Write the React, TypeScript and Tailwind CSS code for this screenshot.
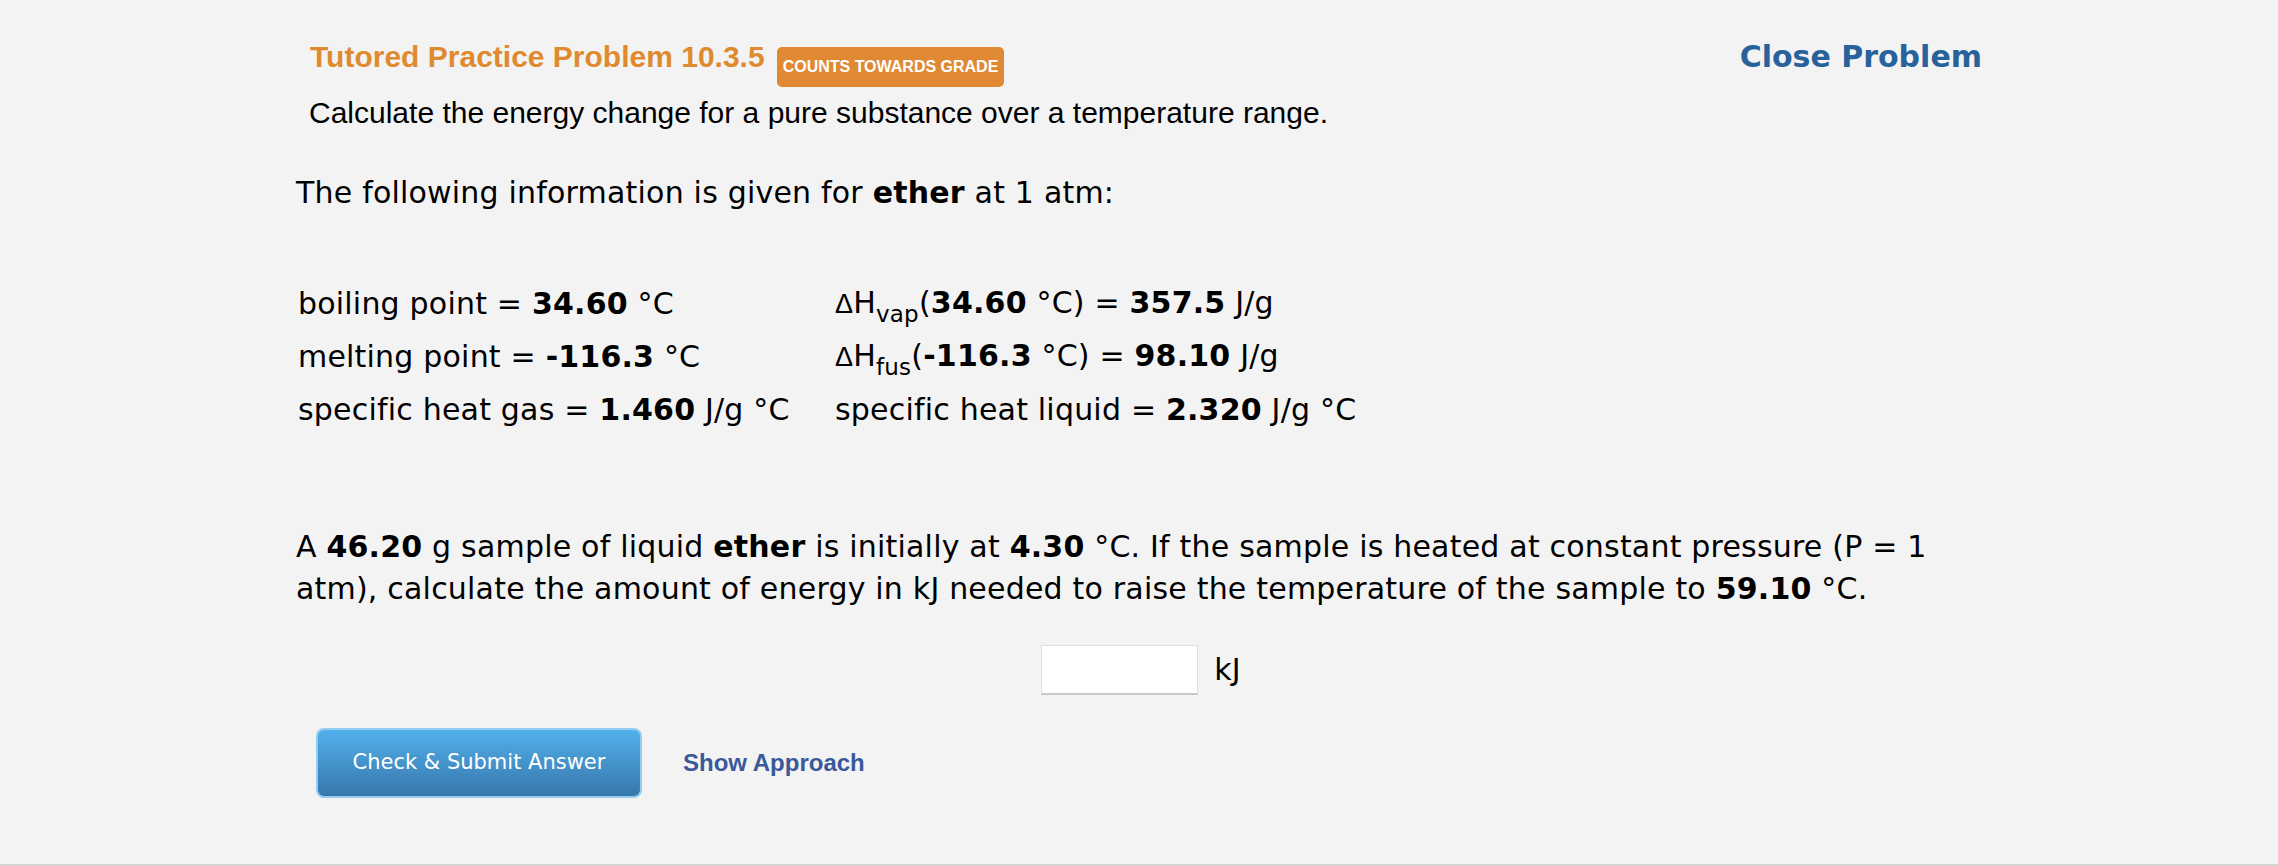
import React from "react";

const body = "font-['DejaVu_Sans',Verdana,sans-serif]";
const arial = "font-['Liberation_Sans',Arial,sans-serif]";

function Sub({ children }: { children: React.ReactNode }) {
  return (
    <span className="relative top-[9px] text-[23px] leading-none">{children}</span>
  );
}

function Delta() {
  return <span className={`${arial} text-[27px] font-normal`}>Δ</span>;
}

export default function App() {
  return (
    <div className="h-[866px] w-full overflow-hidden border-b-2 border-[#d5d5d5] bg-[#f3f3f3] text-black">
      <div className="ml-[296px] w-[1690px] pt-[39px]">
        {/* header */}
        <div className="flex items-start justify-between">
          <div className="flex items-start pl-[14px]">
            <h1 className={`${arial} text-[30px] font-bold leading-[36px] text-[#e08a30]`}>
              Tutored Practice Problem 10.3.5
            </h1>
            <span
              className={`${arial} ml-[12px] mt-[8px] flex h-[40px] items-center rounded-[5px] bg-[#df8a33] px-[6px] text-[16px] font-bold text-white`}
            >
              COUNTS TOWARDS GRADE
            </span>
          </div>
          <a className={`${body} pr-[4px] text-[30px] font-bold leading-[36px] text-[#28629a]`}>
            Close Problem
          </a>
        </div>

        <p className={`${arial} mt-[8px] pl-[13px] text-[30px] leading-[36px]`}>
          Calculate the energy change for a pure substance over a temperature range.
        </p>

        <div className={`${body} text-[30px] leading-[42px] tracking-[0.2px]`}>
          <p className="mt-[41px]">
            The following information is given for <b>ether</b> at 1 atm:
          </p>

          <div className="mt-[63px] grid grid-cols-[537px_auto] pl-[2px]">
            <div className="flex h-[53px] items-center">
              <span>
                boiling point = <b>34.60</b> °C
              </span>
            </div>
            <div className="flex h-[53px] items-center">
              <span>
                <Delta />H<Sub>vap</Sub>(<b>34.60</b> °C) = <b>357.5</b> J/g
              </span>
            </div>
            <div className="flex h-[53px] items-center">
              <span>
                melting point = <b>-116.3</b> °C
              </span>
            </div>
            <div className="flex h-[53px] items-center">
              <span>
                <Delta />H<Sub>fus</Sub>(<b>-116.3</b> °C) = <b>98.10</b> J/g
              </span>
            </div>
            <div className="flex h-[53px] items-center">
              <span>
                specific heat gas = <b>1.460</b> J/g °C
              </span>
            </div>
            <div className="flex h-[53px] items-center">
              <span>
                specific heat liquid = <b>2.320</b> J/g °C
              </span>
            </div>
          </div>

          <p className="mt-[90px]">
            A <b>46.20</b> g sample of liquid <b>ether</b> is initially at <b>4.30</b> °C. If the
            sample is heated at constant pressure (P = 1 atm), calculate the amount of energy in kJ
            needed to raise the temperature of the sample to <b>59.10</b> °C.
          </p>

          <div className="mt-[35px] flex items-center justify-center gap-[16px]">
            <input
              type="text"
              className="h-[50px] w-[157px] border border-[#e0e0e0] border-b-2 border-b-[#c8c8c8] bg-white outline-none"
            />
            <span>kJ</span>
          </div>
        </div>

        <div className="mt-[33px] flex items-center pl-[20px]">
          <button
            type="button"
            className={`${body} h-[70px] w-[326px] rounded-[8px] border-2 border-[#95cdf0] bg-gradient-to-b from-[#52b0ea] to-[#3877ad] text-[21px] text-white`}
          >
            Check &amp; Submit Answer
          </button>
          <a className={`${arial} ml-[41px] text-[24px] font-bold text-[#39599b]`}>
            Show Approach
          </a>
        </div>
      </div>
    </div>
  );
}
